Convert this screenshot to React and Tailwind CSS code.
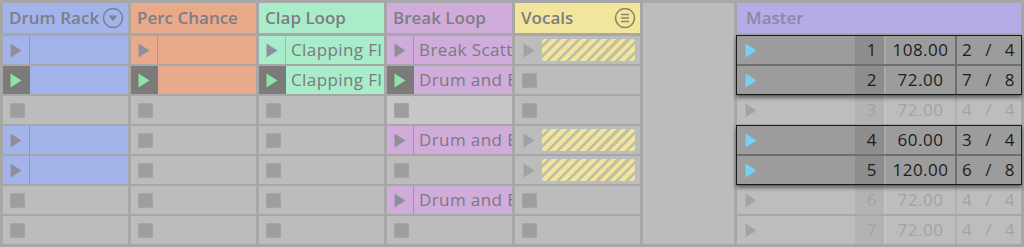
import React from 'react';

// faded session view palette
const TRACKS = [
  {
    name: 'Drum Rack', head: 'bg-[#a3b4ea]', clip: 'bg-[#a3b4ea]', line: 'border-[#8797cc]', icon: 'fold',
    slots: [{ t: 'clip' }, { t: 'clip', playing: true }, { t: 'empty' }, { t: 'clip' }, { t: 'clip' }, { t: 'empty' }, { t: 'empty' }],
  },
  {
    name: 'Perc Chance', head: 'bg-[#e9aa8b]', clip: 'bg-[#e9aa8b]', line: 'border-[#c88d70]',
    slots: [{ t: 'clip' }, { t: 'clip', playing: true }, { t: 'empty' }, { t: 'empty' }, { t: 'empty' }, { t: 'empty' }, { t: 'empty' }],
  },
  {
    name: 'Clap Loop', head: 'bg-[#a9ecc9]', clip: 'bg-[#a9ecc9]', line: 'border-[#88c8a8]',
    slots: [{ t: 'clip', name: 'Clapping Fl' }, { t: 'clip', name: 'Clapping Fl', playing: true }, { t: 'empty' }, { t: 'empty' }, { t: 'empty' }, { t: 'empty' }, { t: 'empty' }],
  },
  {
    name: 'Break Loop', head: 'bg-[#d0acdb]', clip: 'bg-[#d0acdb]', line: 'border-[#ae8cba]',
    slots: [{ t: 'clip', name: 'Break Scatt' }, { t: 'clip', name: 'Drum and B', playing: true }, { t: 'empty', light: true }, { t: 'clip', name: 'Drum and B' }, { t: 'empty' }, { t: 'clip', name: 'Drum and B' }, { t: 'empty' }],
  },
  {
    name: 'Vocals', head: 'bg-[#f2e69c]', icon: 'menu',
    slots: [{ t: 'stripe' }, { t: 'empty' }, { t: 'empty' }, { t: 'stripe' }, { t: 'stripe' }, { t: 'empty' }, { t: 'empty' }],
  },
];

const SCENES = [
  { n: 1, tempo: '108.00', sig: ['2', '4'], on: true },
  { n: 2, tempo: '72.00', sig: ['7', '8'], on: true },
  { n: 3, tempo: '72.00', sig: ['4', '4'] },
  { n: 4, tempo: '60.00', sig: ['3', '4'], on: true },
  { n: 5, tempo: '120.00', sig: ['6', '8'], on: true },
  { n: 6, tempo: '72.00', sig: ['4', '4'] },
  { n: 7, tempo: '72.00', sig: ['4', '4'] },
];

const font = { fontFamily: '"Open Sans", "DejaVu Sans", sans-serif' };

function Play({ color = '#8f8f9c' }) {
  return (
    <svg width="12" height="15" viewBox="0 0 12 15">
      <path d="M0.5 0.5 L11.5 7.5 L0.5 14.5 Z" fill={color} />
    </svg>
  );
}

function Stop() {
  return <div className="w-[15px] h-[15px] bg-[#9e9e9e] border border-[#a6a6a6]" />;
}

function HeadIcon({ kind }) {
  if (kind === 'fold') {
    return (
      <svg width="22" height="22" viewBox="0 0 22 22">
        <circle cx="11" cy="11" r="9.5" fill="none" stroke="#7c8194" strokeWidth="1.6" />
        <path d="M6.5 8.5 L15.5 8.5 L11 14 Z" fill="#7c8194" />
      </svg>
    );
  }
  return (
    <svg width="22" height="22" viewBox="0 0 22 22">
      <circle cx="11" cy="11" r="9.5" fill="none" stroke="#8a8668" strokeWidth="1.6" />
      <path d="M7 7.5 H15 M7 11 H15 M7 14.5 H15" stroke="#8a8668" strokeWidth="1.5" />
    </svg>
  );
}

function Slot({ s, track }) {
  if (s.t === 'clip') {
    return (
      <div className={`h-[28px] flex ${track.clip}`}>
        <div className={`w-[27px] shrink-0 flex items-center justify-center border-r ${s.playing ? 'bg-[#7b7b7b] border-[#7b7b7b]' : track.line}`}>
          <Play color={s.playing ? '#90e2a6' : '#8f8f9c'} />
        </div>
        {/* names are clipped at the slot edge, as in Live */}
        <div className="flex-1 min-w-0 overflow-hidden whitespace-nowrap pl-[5px] text-[17px] tracking-[0.4px] leading-[28px] text-[#7a7a80]">
          {s.name}
        </div>
      </div>
    );
  }
  if (s.t === 'stripe') {
    return (
      <div className="h-[28px] flex items-center bg-[#bcbcbc]">
        <div className="w-[27px] shrink-0 flex items-center justify-center">
          <Play color="#a2a2a2" />
        </div>
        <div className="flex-1 h-[22px] mr-[5px] rounded-[3px] bg-[repeating-linear-gradient(135deg,#f2e69c_0px,#f2e69c_4px,#c2c0a8_4px,#c2c0a8_7px)]" />
      </div>
    );
  }
  return (
    <div className={`h-[28px] flex items-center pl-[7px] ${s.light ? 'bg-[#c7c7c7]' : 'bg-[#bcbcbc]'}`}>
      <Stop />
    </div>
  );
}

function Track({ track }) {
  return (
    <div className="w-[125px] flex flex-col">
      <div className={`h-[30px] flex items-center justify-between pl-[6px] pr-[4px] ${track.head}`}>
        <span className="text-[17px] font-semibold text-[#7d7d86] whitespace-nowrap">{track.name}</span>
        {track.icon && <HeadIcon kind={track.icon} />}
      </div>
      <div className="flex flex-col gap-[2px] mt-[3px]">
        {track.slots.map((s, i) => (
          <Slot key={i} s={s} track={track} />
        ))}
      </div>
    </div>
  );
}

function SceneRow({ sc }) {
  const on = sc.on;
  return (
    <div className={`h-[28px] flex text-[17px] tracking-[0.5px] leading-[28px] ${on ? 'bg-[#9c9c9c] text-[#1c1c1c]' : 'bg-[#bdbdbd] text-[#a3a3a3]'}`}>
      <div className="flex-1 flex items-center pl-[8px]">
        <Play color={on ? '#72d2f0' : '#a4a4a4'} />
      </div>
      <div className={`w-[29px] text-right pr-[7px] ${on ? 'bg-[#8d8d8d]' : 'bg-[#b3b3b3]'}`}>{sc.n}</div>
      <div className={`w-[2px] ${on ? 'bg-[#a9a9a9]' : 'bg-[#c4c4c4]'}`} />
      <div className="w-[69px] text-center">{sc.tempo}</div>
      <div className={`w-[2px] ${on ? 'bg-[#6e6e6e]' : 'bg-[#b0b0b0]'}`} />
      <div className="w-[64px] flex justify-between pl-[5px] pr-[6px]">
        <span>{sc.sig[0]}</span>
        <span>/</span>
        <span>{sc.sig[1]}</span>
      </div>
    </div>
  );
}

function Master() {
  const groups = [[SCENES[0], SCENES[1]], [SCENES[2]], [SCENES[3], SCENES[4]], [SCENES[5]], [SCENES[6]]];
  return (
    <div className="w-[284px] flex flex-col">
      <div className="h-[30px] flex items-center pl-[9px] bg-[#b6abe6]">
        <span className="text-[17px] font-semibold text-[#8c87a6]">Master</span>
      </div>
      <div className="flex flex-col gap-[2px] mt-[3px]">
        {groups.map((g, i) =>
          g[0].on ? (
            <div key={i} className="-mx-[1px] -my-[1px] border border-[#1a1a1a] bg-[#6f6f6f] flex flex-col gap-[2px] shadow-[0_3px_4px_rgba(0,0,0,0.45)] relative z-10">
              {g.map((sc) => (
                <SceneRow key={sc.n} sc={sc} />
              ))}
            </div>
          ) : (
            <SceneRow key={i} sc={g[0]} />
          )
        )}
      </div>
    </div>
  );
}

export default function App() {
  return (
    <div className="w-[1024px] h-[247px] bg-[#a7a7a7] flex gap-[3px] p-[3px] overflow-hidden" style={font}>
      {TRACKS.map((t) => (
        <Track key={t.name} track={t} />
      ))}
      <div className="w-[91px] bg-[#bcbcbc]" />
      <Master />
    </div>
  );
}
